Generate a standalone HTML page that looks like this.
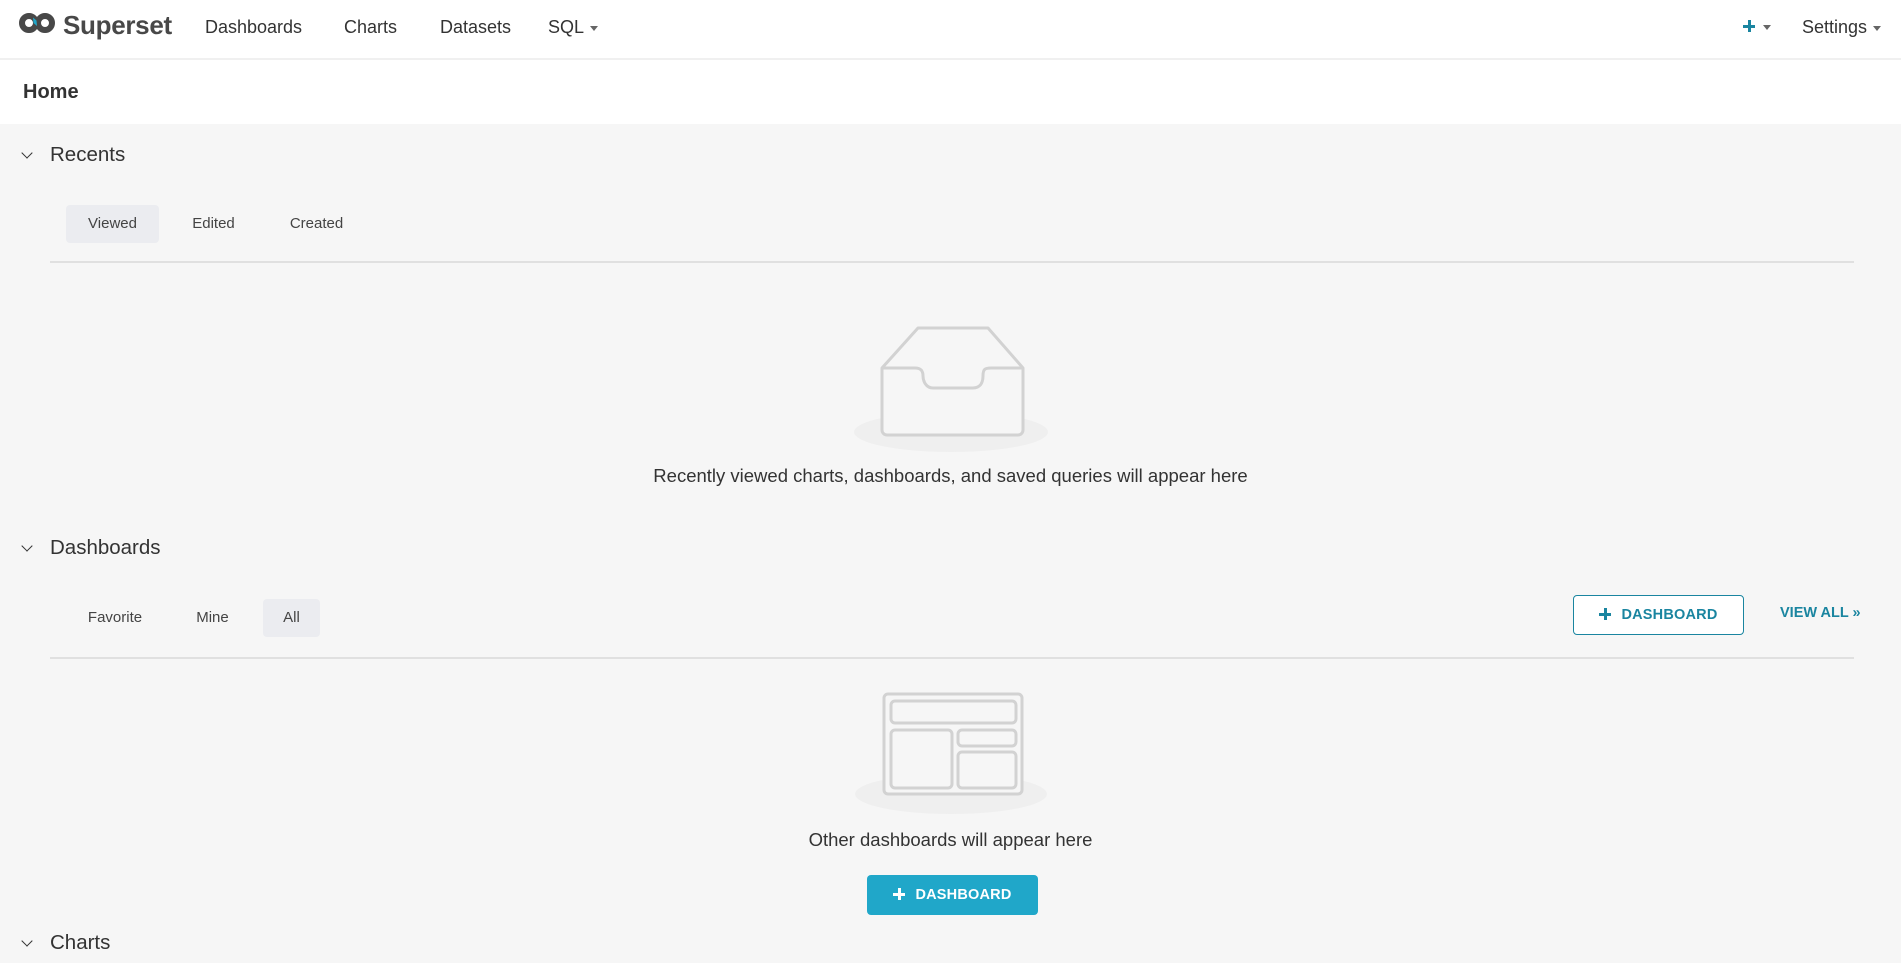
<!DOCTYPE html>
<html><head><meta charset="utf-8"><style>
*{margin:0;padding:0;box-sizing:border-box}
body{width:1901px;height:963px;overflow:hidden;background:#f6f6f6;font-family:"Liberation Sans",sans-serif;color:#333;position:relative}
.abs{position:absolute;white-space:nowrap}
.nav{position:absolute;left:0;top:0;width:1901px;height:60px;background:#fff;border-bottom:2px solid #f0f0f0}
.hdr{position:absolute;left:0;top:60px;width:1901px;height:64px;background:#fff}
.navl{font-size:18px;color:#333;top:17px}
.caret{display:inline-block;width:0;height:0;border-left:4px solid transparent;border-right:4px solid transparent;border-top:5px solid #666;vertical-align:middle;margin-left:6px}
.sec{font-size:20.5px;color:#333}
.chev{position:absolute;width:8px;height:8px;border-right:1.3px solid #333;border-bottom:1.3px solid #333;transform:rotate(45deg)}
.tab{font-size:15px;color:#444;line-height:38px;height:38px;text-align:center;border-radius:4px}
.line{position:absolute;left:50px;width:1804px;height:2px;background:#e0e0e0}
.msg{font-size:18.5px;color:#333;left:0;width:1901px;text-align:center}
.pl{display:inline-block;position:relative;width:12px;height:12px;margin-right:10px;vertical-align:-1px}
.pl:before{content:"";position:absolute;left:0;top:4.5px;width:12px;height:3px;background:currentColor}
.pl:after{content:"";position:absolute;left:4.5px;top:0;width:3px;height:12px;background:currentColor}
</style></head><body>
<div class="nav"></div>
<svg class="abs" style="left:19px;top:12px" width="36" height="22" viewBox="0 0 36 22">
<circle cx="10" cy="11" r="7" fill="none" stroke="#484848" stroke-width="6"/>
<circle cx="26" cy="11" r="7" fill="none" stroke="#484848" stroke-width="6"/>
<path d="M14 5.5 L17.5 8.5 L18 14 L14.5 11z" fill="#20a7c9"/>
<path d="M18 8 L22 5.5 L21.5 11 L18 14z" fill="#484848"/>
</svg>
<div class="abs" style="left:63px;top:10px;font-size:26px;font-weight:bold;color:#484848;letter-spacing:-0.3px">Superset</div>
<div class="abs navl" style="left:205px">Dashboards</div>
<div class="abs navl" style="left:344px">Charts</div>
<div class="abs navl" style="left:440px">Datasets</div>
<div class="abs navl" style="left:548px">SQL<span class="caret"></span></div>
<div class="abs" style="left:1743px;top:20px;color:#1a85a0;"><span class="pl" style="width:15px;height:15px;margin:0"></span></div>
<span class="abs caret" style="left:1757px;top:25px"></span>
<div class="abs navl" style="left:1802px">Settings<span class="caret"></span></div>
<div class="hdr"></div>
<div class="abs" style="left:23px;top:81px;font-size:20px;font-weight:bold;color:#333">Home</div>

<div class="chev" style="left:23px;top:149px"></div>
<div class="abs sec" style="left:50px;top:143px">Recents</div>
<div class="abs tab" style="left:66px;top:205px;width:93px;background:#ebecf0">Viewed</div>
<div class="abs tab" style="left:181px;top:205px;width:65px">Edited</div>
<div class="abs tab" style="left:279px;top:205px;width:75px">Created</div>
<div class="line" style="top:261px"></div>
<svg class="abs" style="left:0;top:0" width="1901" height="963">
<ellipse cx="951" cy="432" rx="97" ry="20" fill="#efefef"/>
<path d="M918 328H988L1023 368V430a5 5 0 0 1-5 5H887a5 5 0 0 1-5-5V368Z" fill="#f6f6f6" stroke="#d2d2d2" stroke-width="3" stroke-linejoin="round"/>
<path d="M882 368H915c6 0 8 3 8 8s3 12 10 12h40c7 0 10-5 10-12s2-8 8-8h32" fill="none" stroke="#d2d2d2" stroke-width="3"/>
<ellipse cx="951" cy="794" rx="96" ry="20" fill="#efefef"/>
<g fill="#f6f6f6" stroke="#d2d2d2" stroke-width="3">
<rect x="884" y="694" width="138" height="100" rx="4"/>
<rect x="891" y="701" width="125" height="22" rx="4"/>
<rect x="891" y="730" width="61" height="58" rx="4"/>
<rect x="958" y="730" width="58" height="16" rx="4"/>
<rect x="958" y="752" width="58" height="36" rx="4"/>
</g>
</svg>
<div class="abs msg" style="top:465px">Recently viewed charts, dashboards, and saved queries will appear here</div>

<div class="chev" style="left:23px;top:542px"></div>
<div class="abs sec" style="left:50px;top:536px">Dashboards</div>
<div class="abs tab" style="left:70px;top:599px;width:90px">Favorite</div>
<div class="abs tab" style="left:185px;top:599px;width:55px">Mine</div>
<div class="abs tab" style="left:263px;top:599px;width:57px;background:#ebecf0">All</div>
<div class="abs" style="left:1573px;top:595px;width:171px;height:40px;border:1px solid #1a85a0;border-radius:4px;background:#fff;color:#1a85a0;font-size:14.5px;font-weight:bold;line-height:38px;text-align:center;letter-spacing:0.2px"><span class="pl"></span>DASHBOARD</div>
<div class="abs" style="left:1780px;top:605px;font-size:14.5px;font-weight:bold;color:#1a85a0">VIEW ALL »</div>
<div class="line" style="top:657px"></div>
<div class="abs msg" style="top:829px">Other dashboards will appear here</div>
<div class="abs" style="left:867px;top:875px;width:171px;height:40px;border-radius:4px;background:#20a7c9;color:#fff;font-size:14.5px;font-weight:bold;line-height:40px;text-align:center;letter-spacing:0.2px"><span class="pl"></span>DASHBOARD</div>

<div class="chev" style="left:23px;top:937px"></div>
<div class="abs sec" style="left:50px;top:931px">Charts</div>
</body></html>
